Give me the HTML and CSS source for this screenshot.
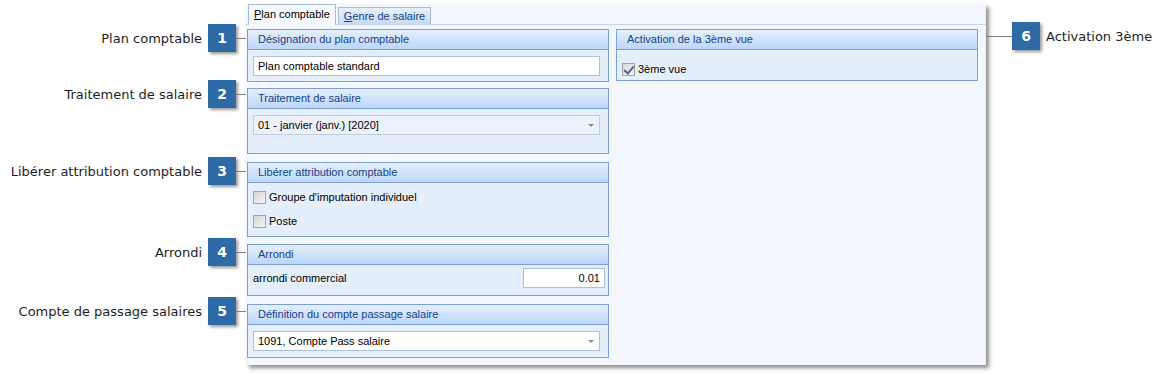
FILE: index.html
```html
<!DOCTYPE html>
<html lang="fr">
<head>
    <meta charset="UTF-8">
    <title>Plan comptable</title>
    <link rel="stylesheet" href="styles.css">
</head>
<body>
    <div class="page">
        <div class="callouts left">
            <div class="callout c1"><span class="label">Plan comptable</span><span class="num">1</span><span class="line"></span></div>
            <div class="callout c2"><span class="label">Traitement de salaire</span><span class="num">2</span><span class="line"></span></div>
            <div class="callout c3"><span class="label">Libérer attribution comptable</span><span class="num">3</span><span class="line"></span></div>
            <div class="callout c4"><span class="label">Arrondi</span><span class="num">4</span><span class="line"></span></div>
            <div class="callout c5"><span class="label">Compte de passage salaires</span><span class="num">5</span><span class="line"></span></div>
        </div>

        <div class="window">
            <div class="tabs">
                <div class="tab active"><u>P</u>lan comptable</div>
                <div class="tab"><u>G</u>enre de salaire</div>
            </div>
            <div class="tab-body">
                <div class="col">
                    <div class="group g1">
                        <div class="group-head">Désignation du plan comptable</div>
                        <div class="group-body">
                            <div class="field">Plan comptable standard</div>
                        </div>
                    </div>
                    <div class="group g2">
                        <div class="group-head">Traitement de salaire</div>
                        <div class="group-body">
                            <div class="combo disabled">01 - janvier (janv.) [2020]<span class="arrow"></span></div>
                        </div>
                    </div>
                    <div class="group g3">
                        <div class="group-head">Libérer attribution comptable</div>
                        <div class="group-body checks">
                            <label class="check"><span class="box"></span>Groupe d'imputation individuel</label>
                            <label class="check"><span class="box"></span>Poste</label>
                        </div>
                    </div>
                    <div class="group g4">
                        <div class="group-head">Arrondi</div>
                        <div class="group-body row">
                            <span>arrondi commercial</span>
                            <div class="field num-field">0.01</div>
                        </div>
                    </div>
                    <div class="group g5">
                        <div class="group-head">Définition du compte passage salaire</div>
                        <div class="group-body">
                            <div class="combo">1091, Compte Pass salaire<span class="arrow"></span></div>
                        </div>
                    </div>
                </div>
                <div class="col">
                    <div class="group g6">
                        <div class="group-head">Activation de la 3ème vue</div>
                        <div class="group-body">
                            <label class="check"><span class="box checked"></span>3ème vue</label>
                        </div>
                    </div>
                </div>
            </div>
        </div>

        <div class="callouts right">
            <div class="callout c6"><span class="line"></span><span class="num">6</span><span class="label">Activation 3ème</span></div>
        </div>
    </div>
</body>
</html>
```

FILE: styles.css
```css
* {
    box-sizing: border-box;
}
body {
    margin: 0;
    background: #ffffff;
    font-family: "DejaVu Sans", Verdana, sans-serif;
    color: #1e1e1e;
}
.page {
    display: flex;
    align-items: flex-start;
    width: 1169px;
    height: 374px;
}

/* callouts */
.callouts {
    display: flex;
    flex-direction: column;
}
.callouts.left {
    width: 246px;
    flex-shrink: 0;
}
.callout {
    display: flex;
    align-items: center;
    height: 28px;
}
.callouts.left .callout {
    justify-content: flex-end;
}
.c1 { margin-top: 24px; }
.c2 { margin-top: 28px; }
.c3 { margin-top: 49px; }
.c4 { margin-top: 53px; }
.c5 { margin-top: 31px; }
.c6 { margin-top: 22px; }
.label {
    font-size: 13px;
    white-space: nowrap;
}
.num {
    width: 28px;
    height: 28px;
    flex-shrink: 0;
    background: #2d6aa6;
    color: #ffffff;
    font-weight: bold;
    font-size: 14px;
    display: flex;
    align-items: center;
    justify-content: center;
    box-shadow: 2px 2px 3px rgba(0, 0, 0, 0.4);
}
.callouts.left .num {
    margin-left: 6px;
}
.callouts.left .line {
    width: 10px;
    height: 1px;
    background: #808080;
}
.callouts.right .line {
    width: 26px;
    height: 1px;
    background: #808080;
}
.callouts.right .label {
    margin-left: 6px;
}

/* window */
.window {
    width: 740px;
    height: 361px;
    margin-top: 4px;
    flex-shrink: 0;
    background: #f3f7fd;
    box-shadow: 3px 3px 4px rgba(0, 0, 0, 0.45);
    font-family: "Liberation Sans", Tahoma, sans-serif;
    font-size: 11px;
    color: #000000;
}
.tabs {
    display: flex;
    align-items: flex-end;
    height: 21px;
    padding-left: 2px;
    border-bottom: 1px solid #c5d3e6;
}
.tab {
    height: 17px;
    padding: 0 5px;
    margin-right: 2px;
    line-height: 16px;
    border: 1px solid #a9bcd6;
    border-bottom: none;
    background: linear-gradient(#e8f0fb, #c9dbf4);
    color: #15428b;
}
.tab.active {
    height: 21px;
    line-height: 19px;
    margin-bottom: -1px;
    background: #f6f9fe;
    color: #000000;
}
.tab-body {
    display: flex;
    gap: 7px;
    padding: 4px 0 0 1px;
}
.col {
    width: 362px;
    display: flex;
    flex-direction: column;
}

/* group boxes */
.group {
    border: 1px solid #7c9fd8;
    background: #e5eefb;
    display: flex;
    flex-direction: column;
}
.group-head {
    height: 20px;
    line-height: 19px;
    padding-left: 10px;
    border-bottom: 1px solid #7c9fd8;
    background: linear-gradient(#e6effc, #bcd6f8);
    color: #15428b;
}
.group-body {
    flex: 1;
    padding: 6px 8px 0 5px;
}
.g1 { height: 53px; }
.g2 { height: 66px; margin-top: 6px; }
.g3 { height: 75px; margin-top: 8px; }
.g4 { height: 52px; margin-top: 7px; }
.g5 { height: 54px; margin-top: 8px; }
.g6 { height: 52px; }

.field {
    height: 20px;
    line-height: 18px;
    padding: 0 4px;
    background: #ffffff;
    border: 1px solid #abc1de;
}
.combo {
    position: relative;
    height: 20px;
    line-height: 18px;
    padding: 0 4px;
    background: #ffffff;
    border: 1px solid #abc1de;
}
.combo.disabled {
    background: #edf2fa;
    border-color: #bfcde1;
}
.arrow {
    position: absolute;
    right: 5px;
    top: 8px;
    border-left: 3px solid transparent;
    border-right: 3px solid transparent;
    border-top: 3px solid #8a8a8a;
}
.row {
    display: flex;
    align-items: flex-start;
    justify-content: space-between;
    padding-top: 3px;
    padding-right: 3px;
}
.row span {
    line-height: 20px;
}
.num-field {
    width: 82px;
    text-align: right;
}
.checks {
    display: flex;
    flex-direction: column;
    gap: 10px;
    padding-top: 7px;
}
.check {
    display: flex;
    align-items: center;
    gap: 3px;
    height: 14px;
}
.g6 .group-body {
    padding-top: 12px;
}
.box {
    width: 13px;
    height: 13px;
    border: 1px solid #a3a3a3;
    background: linear-gradient(135deg, #d6d6d6, #f7f7f7);
    position: relative;
}
.box.checked::after {
    content: "";
    position: absolute;
    left: 3px;
    top: 0;
    width: 4px;
    height: 8px;
    border-right: 2px solid #4a6a9c;
    border-bottom: 2px solid #4a6a9c;
    transform: rotate(40deg);
}
```
